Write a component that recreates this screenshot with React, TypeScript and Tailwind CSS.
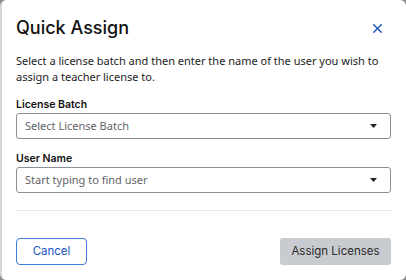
import { X } from "lucide-react";

function Caret() {
  return (
    <svg width="7" height="4" viewBox="0 0 7 4" className="shrink-0">
      <path d="M0 0h7L3.5 4z" fill="#222" />
    </svg>
  );
}

function SelectBox({ placeholder }: { placeholder: string }) {
  return (
    <div className="flex h-[26px] items-center justify-between rounded-[3px] border border-[#8a8f94] pl-[8px] pr-[13px]">
      <span className="text-[11px] text-[#5f6368]">{placeholder}</span>
      <Caret />
    </div>
  );
}

export default function App() {
  return (
    <div className="h-[280px] w-[406px] overflow-hidden bg-[#888]">
      <div
        className="flex h-[280px] w-[406px] flex-col rounded-[6px] border-l-2 border-[#d6d6d6] bg-white pl-[14px] pr-[15px]"
        style={{ fontFamily: '"Noto Sans", "Open Sans", sans-serif' }}
      >
        {/* Header */}
        <div className="mt-[14px] flex h-[28px] items-center justify-between">
          <h2 className="text-[18px] font-medium leading-[22px] text-[#111]" style={{ fontFamily: "Inter, sans-serif" }}>
            Quick Assign
          </h2>
          <X className="mr-[6px] h-[15px] w-[15px] text-[#1a56c4]" strokeWidth={2.2} />
        </div>

        <p className="mt-[11px] text-[11px] leading-[16px] text-[#222]">
          Select a license batch and then enter the name of the user you wish to assign a teacher license to.
        </p>

        <label className="mt-[14px] block text-[10.5px] font-semibold leading-[12px] text-[#111]" style={{ fontFamily: "Inter, sans-serif" }}>
          License Batch
        </label>
        <div className="mt-[2px]">
          <SelectBox placeholder="Select License Batch" />
        </div>

        <label className="mt-[14px] block text-[10.5px] font-semibold leading-[12px] text-[#111]" style={{ fontFamily: "Inter, sans-serif" }}>
          User Name
        </label>
        <div className="mt-[2px]">
          <SelectBox placeholder="Start typing to find user" />
        </div>

        <div className="mt-[17px] h-px bg-[#e5e7ea]" />

        {/* Footer */}
        <div className="mt-[27px] flex items-center justify-between" style={{ fontFamily: "Inter, sans-serif" }}>
          <button className="h-[27px] w-[71px] rounded-[4px] border border-[#3f7ad9] text-[11.5px] text-[#1a56c4]">
            Cancel
          </button>
          <button className="h-[27px] w-[111px] rounded-[3px] bg-[#c8ccd0] text-[11.5px] text-[#2a2a2a]">
            Assign Licenses
          </button>
        </div>
      </div>
    </div>
  );
}
